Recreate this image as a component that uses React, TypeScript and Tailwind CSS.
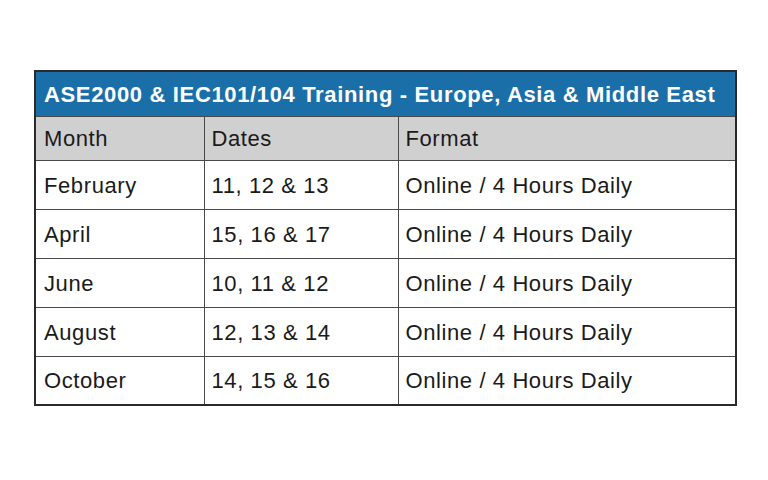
const rows = [
  ["February", "11, 12 & 13", "Online / 4 Hours Daily"],
  ["April", "15, 16 & 17", "Online / 4 Hours Daily"],
  ["June", "10, 11 & 12", "Online / 4 Hours Daily"],
  ["August", "12, 13 & 14", "Online / 4 Hours Daily"],
  ["October", "14, 15 & 16", "Online / 4 Hours Daily"],
];

export default function App() {
  return (
    <div className="w-[768px] h-[480px] bg-white pt-[70px] pl-[34px] font-['Liberation_Sans',Arial,sans-serif] text-[#1a1a1a]">
      <table className="w-[703px] border-collapse border-2 border-[#2a2a2a] text-[22px] leading-none tracking-[0.6px]">
        <thead>
          <tr className="h-[45px] bg-[#1b6fa8]">
            <th colSpan={3} className="pl-[8px] pt-[2px] text-left font-bold text-white tracking-[0.65px]">
              ASE2000 &amp; IEC101/104 Training - Europe, Asia &amp; Middle East
            </th>
          </tr>
          <tr className="h-[44px] bg-[#d0d0d0]">
            <th className="w-[169px] border-[1.5px] border-[#4a4a4a] pl-[8px] pt-[2px] text-left font-normal">Month</th>
            <th className="w-[194px] border-[1.5px] border-[#4a4a4a] pl-[7px] pt-[2px] text-left font-normal">Dates</th>
            <th className="border-[1.5px] border-[#4a4a4a] pl-[7px] pt-[2px] text-left font-normal">Format</th>
          </tr>
        </thead>
        <tbody>
          {rows.map((r) => (
            <tr key={r[0]} className="h-[49px]">
              {r.map((c, i) => (
                <td key={i} className={i === 0 ? "border-[1.5px] border-[#4a4a4a] pl-[8px] pt-[2px]" : "border-[1.5px] border-[#4a4a4a] pl-[7px] pt-[2px]"}>
                  {c}
                </td>
              ))}
            </tr>
          ))}
        </tbody>
      </table>
    </div>
  );
}
